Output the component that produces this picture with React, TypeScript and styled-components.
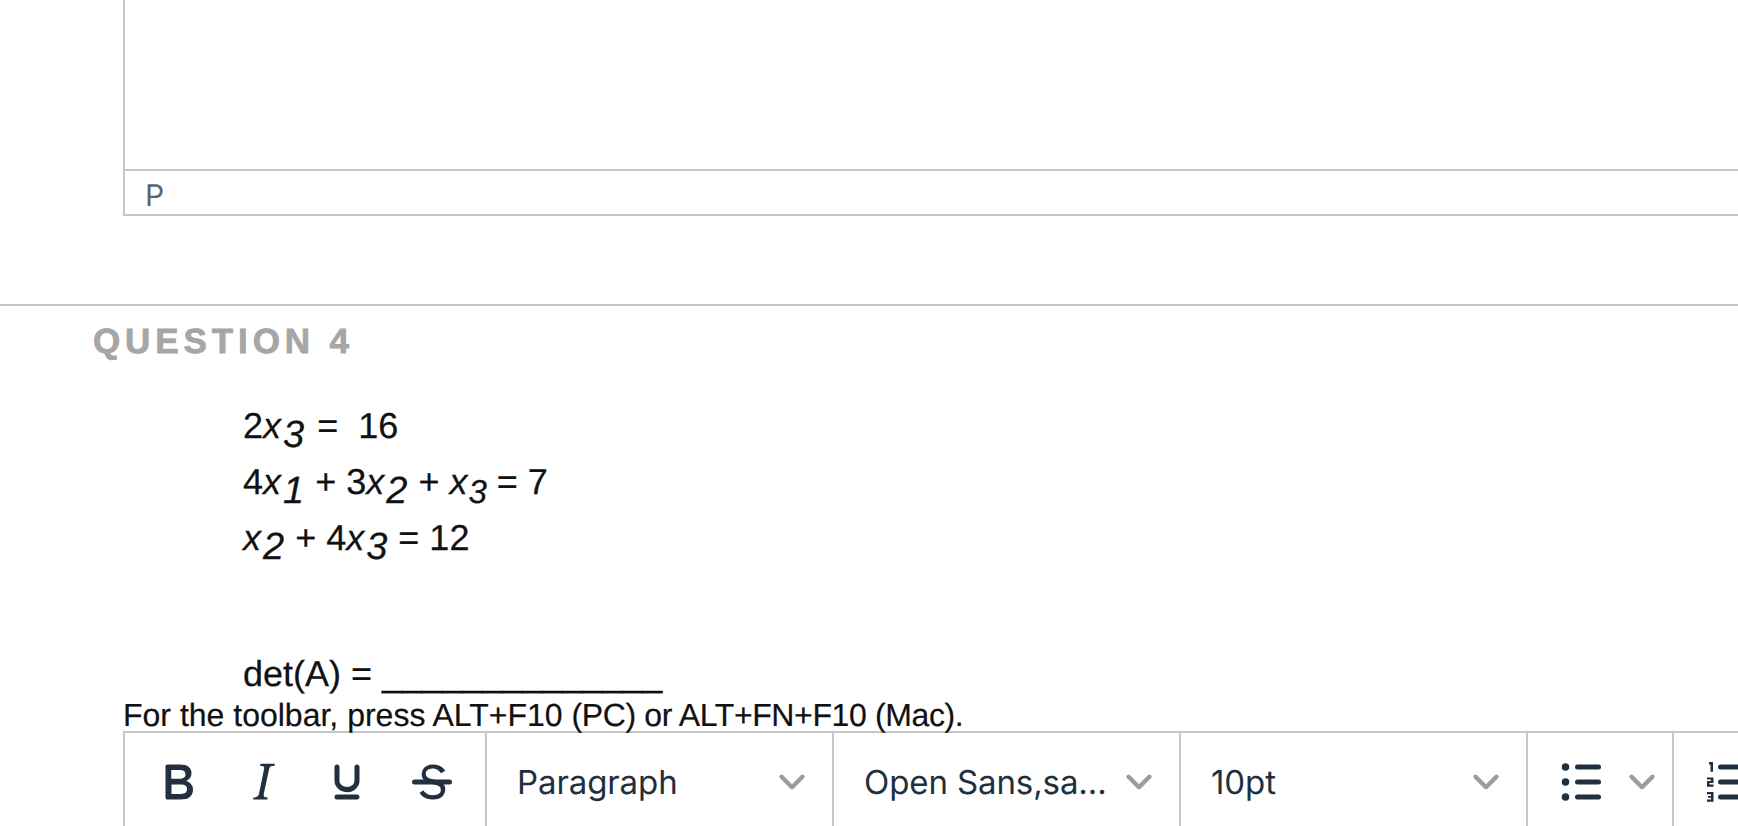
import React from "react"
import styled, { createGlobalStyle } from "styled-components"

const GlobalStyle = createGlobalStyle`
  html, body {
    margin: 0;
    padding: 0;
    background: #fff;
    overflow: hidden;
  }
`

const Page = styled.div`
  width: 1738px;
  height: 826px;
  overflow: hidden;
  font-family: "Liberation Sans", Arial, sans-serif;
  text-rendering: geometricPrecision;
  color: #111;
`

const EditorFrame = styled.div`
  margin-left: 123px;
  border-left: 2px solid #c6c6c6;
  border-bottom: 2px solid #c6c6c6;
`

const EditorBody = styled.div`
  height: 169px;
  border-bottom: 2px solid #c6c6c6;
`

const StatusBar = styled.div`
  height: 43px;
  padding: 6px 0 0 20px;
  box-sizing: border-box;
  display: flex;
  align-items: center;
  font-family: Inter, sans-serif;
  font-size: 30px;
  color: #5b6570;
`

const Divider = styled.hr`
  margin: 88px 0 0;
  border: 0;
  border-top: 2px solid #c6c6c6;
`

const QuestionTitle = styled.h3`
  margin: 0;
  padding: 16px 0 0 93px;
  height: 33px;
  font-size: 35px;
  line-height: 40px;
  letter-spacing: 4.9px;
  font-weight: 700;
  color: #a6a6a6;
  -webkit-text-stroke: 0.8px #a6a6a6;
`

const Equations = styled.div`
  margin-top: 43px;
  padding-left: 243px;
  font-size: 36px;
  -webkit-text-stroke: 0.25px #111;
`

const EquationLine = styled.div`
  height: 56px;
  line-height: 56px;
  white-space: pre;
`

const Var = styled.i`
  font-style: italic;
`

const Sub = styled.i<{ $small?: boolean; $trail?: number }>`
  font-style: italic;
  font-size: ${(p) => (p.$small ? "33px" : "38px")};
  line-height: 0;
  vertical-align: -9px;
  margin-left: ${(p) => (p.$small ? "1px" : "2px")};
  margin-right: ${(p) => p.$trail ?? 1}px;
`

const Answer = styled.div`
  margin-top: 86px;
  padding-left: 243px;
  height: 44px;
  line-height: 44px;
  font-size: 36px;
  white-space: pre;
  -webkit-text-stroke: 0.25px #111;
`

const ToolbarHint = styled.div`
  margin-left: 123px;
  height: 35px;
  line-height: 38px;
  font-size: 32px;
  white-space: pre;
  -webkit-text-stroke: 0.2px #111;
`

const HintTail = styled.span`
  letter-spacing: -0.38px;
`

const Toolbar = styled.div`
  display: flex;
  height: 98px;
  margin-left: 123px;
  border-top: 2px solid #c6c6c6;
  border-left: 2px solid #c6c6c6;
  color: #222f3e;
`

const Group = styled.div`
  display: flex;
  align-items: center;
  flex: none;
  box-sizing: border-box;
  border-right: 2px solid #c6c6c6;
`

const FormatGroup = styled(Group)`
  width: 362px;
  padding-left: 23px;
  gap: 24.5px;
`

const SelectGroup = styled(Group)`
  width: 347px;
  padding: 0 27px 0 30px;
  justify-content: space-between;
  font-family: Inter, sans-serif;
  font-size: 33px;
  letter-spacing: -0.1px;
`

const SplitGroup = styled(Group)`
  width: 146px;
  padding-left: 23px;
  gap: 18px;
`

const LastGroup = styled(Group)`
  flex: 1;
  border-right: 0;
  padding-left: 24px;
`

const Icon = styled.svg`
  width: 60px;
  height: 60px;
  flex: none;
  fill: #222f3e;
`

const ChevronIcon = styled.svg`
  width: 26px;
  height: 16px;
  flex: none;
  fill: none;
  stroke: #999ca1;
  stroke-width: 1.7;
  stroke-linecap: round;
  stroke-linejoin: round;
`

const Chevron = () => (
  <ChevronIcon viewBox="0 0 10 6">
    <path d="M1 1l4 4 4-4" />
  </ChevronIcon>
)

const Select = ({ label }: { label: string }) => (
  <SelectGroup>
    <span>{label}</span>
    <Chevron />
  </SelectGroup>
)

const App: React.FC = () => {
  return (
    <Page>
      <GlobalStyle />
      <EditorFrame>
        <EditorBody />
        <StatusBar>P</StatusBar>
      </EditorFrame>
      <Divider />
      <QuestionTitle>QUESTION 4</QuestionTitle>
      <Equations>
        <EquationLine>
          2<Var>x</Var>
          <Sub $trail={3}>3</Sub>
          {" =  16"}
        </EquationLine>
        <EquationLine>
          4<Var>x</Var>
          <Sub>1</Sub>
          {" + 3"}
          <Var>x</Var>
          <Sub>2</Sub>
          {" + "}
          <Var>x</Var>
          <Sub $small $trail={0}>3</Sub>
          {" = 7"}
        </EquationLine>
        <EquationLine>
          <Var>x</Var>
          <Sub>2</Sub>
          {" + 4"}
          <Var>x</Var>
          <Sub>3</Sub>
          {" = 12"}
        </EquationLine>
      </Equations>
      <Answer>det(A) = ______________</Answer>
      <ToolbarHint>
        For the toolbar, press ALT+F10 <HintTail>(PC) or ALT+FN+F10 (Mac).</HintTail>
      </ToolbarHint>
      <Toolbar>
        <FormatGroup>
          <Icon viewBox="0 0 24 24">
            <path d="M7.8 19c-.3 0-.5 0-.6-.2l-.2-.5V5.7c0-.2 0-.4.2-.5l.6-.2h5c1.5 0 2.7.3 3.5 1 .7.6 1.1 1.4 1.1 2.5a3 3 0 0 1-.6 1.9c-.4.6-1 1-1.6 1.2.4.1.9.3 1.3.6s.8.7 1 1.2c.4.4.5 1 .5 1.6 0 1.3-.4 2.3-1.3 3-.8.7-2.1 1-3.8 1H7.8zm5-8.3c.6 0 1.2-.1 1.6-.5.4-.3.6-.7.6-1.3 0-1.1-.8-1.7-2.3-1.7H9.3v3.5h3.4zm.5 6c.7 0 1.3-.1 1.7-.4.4-.4.6-.9.6-1.5s-.2-1-.7-1.4c-.4-.3-1-.4-2-.4H9.4v3.8h4z" fillRule="evenodd" />
          </Icon>
          <Icon viewBox="0 0 24 24">
            <path d="M16.7 4.7l-.1.9h-.3c-.6 0-1 0-1.4.3-.3.3-.4.6-.5 1.1l-2.1 9.8v.6c0 .5.4.8 1.4.8h.2l-.2.8H8l.2-.8h.2c1.1 0 1.8-.5 2-1.5l2-9.8.1-.5c0-.6-.4-.8-1.4-.8h-.3l.2-.9h5.8z" fillRule="evenodd" />
          </Icon>
          <Icon viewBox="0 0 24 24">
            <path d="M16 5c.6 0 1 .4 1 1v5.5a4 4 0 0 1-.4 1.8l-1 1.4a5.3 5.3 0 0 1-5.5 1 5 5 0 0 1-1.6-1c-.5-.4-.8-.9-1.1-1.4a4 4 0 0 1-.4-1.8V6c0-.6.4-1 1-1s1 .4 1 1v5.5c0 .3 0 .6.2 1l.6.7a3.3 3.3 0 0 0 2.2.8 3.4 3.4 0 0 0 2.2-.8c.3-.2.4-.5.6-.8l.2-.9V6c0-.6.4-1 1-1zM8 17h8c.6 0 1 .4 1 1s-.4 1-1 1H8a1 1 0 0 1 0-2z" fillRule="evenodd" />
          </Icon>
          <Icon viewBox="0 0 24 24">
            <path d="M15.6 8.5c-.5-.7-1-1.1-1.3-1.3-.6-.4-1.3-.6-2-.6-2.7 0-2.8 1.7-2.8 2.1 0 1.6 1.8 2 3.2 2.3 4.4.9 4.6 2.8 4.6 3.9 0 1.4-.7 4.1-5 4.1A6.2 6.2 0 0 1 7 16.4l1.5-1.1c.4.6 1.6 2 3.7 2 1.6 0 2.5-.4 3-1 .3-.4.3-.9.3-1.3 0-1-.6-1.6-3-2.1-2.9-.6-4.6-1.7-4.6-3.9 0-1 .4-4 4.6-4 1.4 0 2.5.4 3.4 1 .4.3 1 .9 1.4 1.5l-1.7 1z" />
            <path d="M5 11h14a1 1 0 0 1 0 2H5a1 1 0 0 1 0-2z" />
          </Icon>
        </FormatGroup>
        <Select label="Paragraph" />
        <Select label="Open Sans,sa..." />
        <Select label="10pt" />
        <SplitGroup>
          <Icon viewBox="0 0 24 24">
            <circle cx="5.8" cy="6" r="1.5" />
            <circle cx="5.8" cy="12" r="1.5" />
            <circle cx="5.8" cy="18" r="1.5" />
            <rect x="9.6" y="5" width="10.4" height="2" rx="1" />
            <rect x="9.6" y="11" width="10.4" height="2" rx="1" />
            <rect x="9.6" y="17" width="10.4" height="2" rx="1" />
          </Icon>
          <Chevron />
        </SplitGroup>
        <LastGroup>
          <Icon viewBox="0 0 24 24">
            <path d="M4.4 4h1.6v3.9h-1V5h-.6zM3.6 10.2h2.6v2.2H4.6v.6h1.6v.9H3.6v-2.3h1.6v-.6H3.6zM3.6 16h2.6v3.9H3.6V19h1.6v-.7H4v-.7h1.2v-.7H3.6z" />
            <rect x="8" y="5" width="12" height="2" rx="1" />
            <rect x="8" y="11" width="12" height="2" rx="1" />
            <rect x="8" y="17" width="12" height="2" rx="1" />
          </Icon>
        </LastGroup>
      </Toolbar>
    </Page>
  )
}

export default App
